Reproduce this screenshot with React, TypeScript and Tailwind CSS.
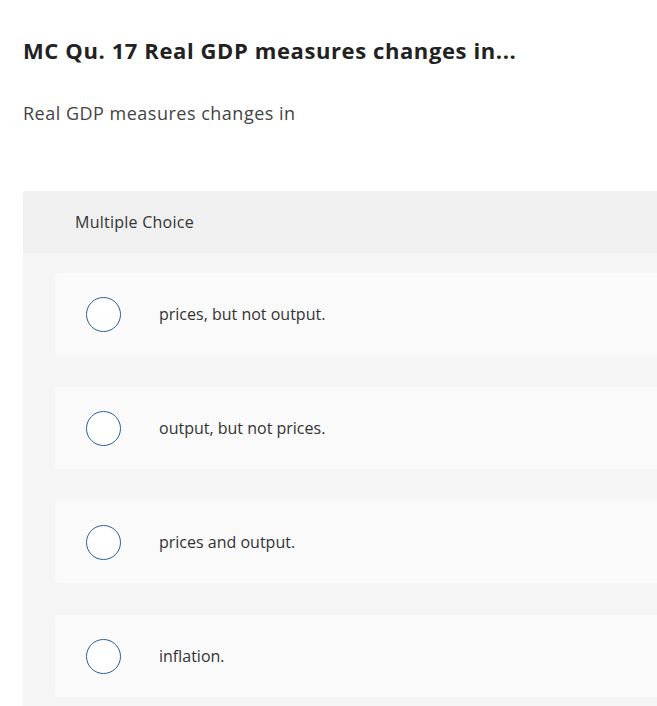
const OPTIONS = [
  "prices, but not output.",
  "output, but not prices.",
  "prices and output.",
  "inflation.",
];

export default function App() {
  return (
    <div className="min-h-screen bg-white pt-[35px] pl-[23px] font-['Open_Sans','Liberation_Sans',sans-serif] text-[#333]">
      <h1 className="text-[22px] font-bold leading-[30px] tracking-[0.6px] text-[#222]">
        MC Qu. 17 Real GDP measures changes in...
      </h1>
      <p className="mt-[36px] text-[18px] leading-[24px] tracking-[0.5px] text-[#444]">Real GDP measures changes in</p>

      <div className="mt-[66px] overflow-hidden rounded-tl-[3px] bg-[#f5f5f5]">
        <div className="flex h-[62px] items-center bg-[#f0f0f0] pl-[52px] text-[16px] tracking-[0.25px] text-[#333]">
          Multiple Choice
        </div>
        <div className="flex flex-col gap-[32px] pt-[20px] pb-[10px] pl-[32px]">
          {OPTIONS.map((label) => (
            <div key={label} className="flex h-[82px] items-center rounded-l-[4px] bg-[#fafafa] pl-[31px]">
              <span className="h-[35px] w-[35px] shrink-0 rounded-full border-[1.5px] border-[#2a5f9a] bg-white" />
              <span className="ml-[38px] text-[16px] text-[#333]">{label}</span>
            </div>
          ))}
        </div>
      </div>
    </div>
  );
}
